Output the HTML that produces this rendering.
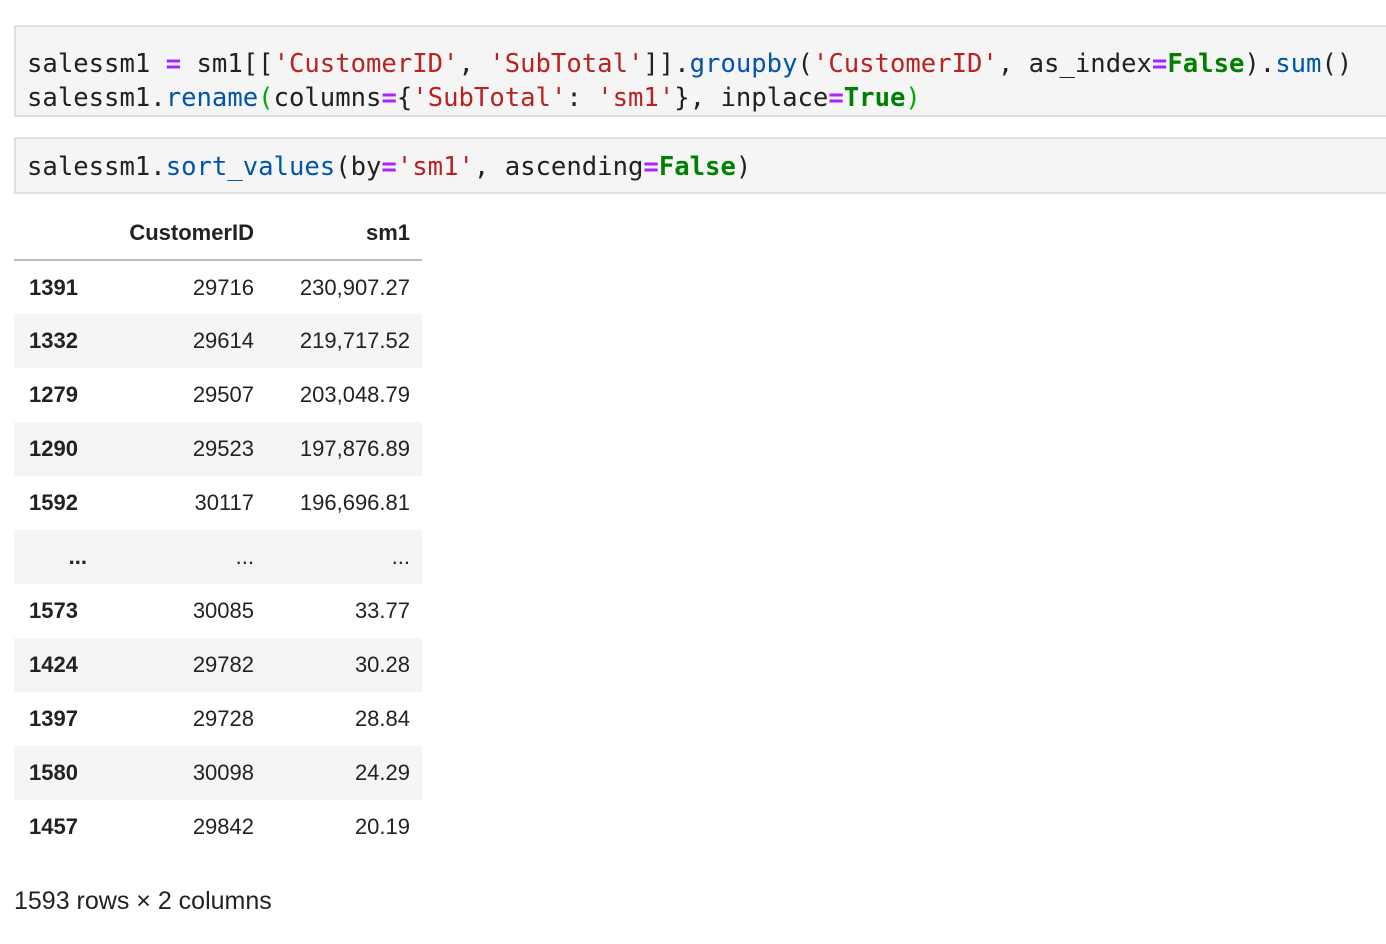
<!DOCTYPE html>
<html><head><meta charset="utf-8"><style>
body{margin:0;background:#fff;width:1386px;height:944px;overflow:hidden;position:relative;font-family:"Liberation Sans",Arial,sans-serif;}
.cell{position:absolute;left:14px;width:1380px;background:#f5f5f5;border:2px solid #e0e0e0;box-sizing:border-box;font-family:"DejaVu Sans Mono",monospace;font-size:25.6px;line-height:34px;color:#212121;padding-left:11px;white-space:pre;}
.k{color:#aa22ff;font-weight:bold}.s{color:#ba2121}.f{color:#0055aa}.g{color:#008000;font-weight:bold}.p{color:#00aa00}
table{position:absolute;left:14px;top:206px;border-collapse:collapse;font-size:22px;color:#222;}
td,th{height:54px;padding:0 12px;text-align:right;box-sizing:border-box}
thead th{height:54px;border-bottom:2px solid #bdbdbd;}
tbody th{text-align:left;padding-left:15px}
tbody tr:nth-child(even){background:#f5f5f5}
.foot{position:absolute;left:14px;top:887px;font-size:25px;color:#222}
</style></head><body>
<div class="cell" style="top:25px;height:92px;padding-top:20px">salessm1 <span class="k">=</span> sm1[[<span class="s">'CustomerID'</span>, <span class="s">'SubTotal'</span>]].<span class="f">groupby</span>(<span class="s">'CustomerID'</span>, as_index<span class="k">=</span><span class="g">False</span>).<span class="f">sum</span>()
salessm1.<span class="f">rename</span><span class="p">(</span>columns<span class="k">=</span>{<span class="s">'SubTotal'</span>: <span class="s">'sm1'</span>}, inplace<span class="k">=</span><span class="g">True</span><span class="p">)</span></div>
<div class="cell" style="top:137px;height:57px;padding-top:11px">salessm1.<span class="f">sort_values</span>(by<span class="k">=</span><span class="s">'sm1'</span>, ascending<span class="k">=</span><span class="g">False</span>)</div>
<table>
<colgroup><col style="width:84px"><col style="width:168px"><col style="width:156px"></colgroup>
<thead><tr><th></th><th>CustomerID</th><th>sm1</th></tr></thead>
<tbody>
<tr><th>1391</th><td>29716</td><td>230,907.27</td></tr>
<tr><th>1332</th><td>29614</td><td>219,717.52</td></tr>
<tr><th>1279</th><td>29507</td><td>203,048.79</td></tr>
<tr><th>1290</th><td>29523</td><td>197,876.89</td></tr>
<tr><th>1592</th><td>30117</td><td>196,696.81</td></tr>
<tr><th style="text-align:right;padding-right:11px">...</th><td>...</td><td>...</td></tr>
<tr><th>1573</th><td>30085</td><td>33.77</td></tr>
<tr><th>1424</th><td>29782</td><td>30.28</td></tr>
<tr><th>1397</th><td>29728</td><td>28.84</td></tr>
<tr><th>1580</th><td>30098</td><td>24.29</td></tr>
<tr><th>1457</th><td>29842</td><td>20.19</td></tr>
</tbody></table>
<div class="foot">1593 rows × 2 columns</div>
</body></html>
